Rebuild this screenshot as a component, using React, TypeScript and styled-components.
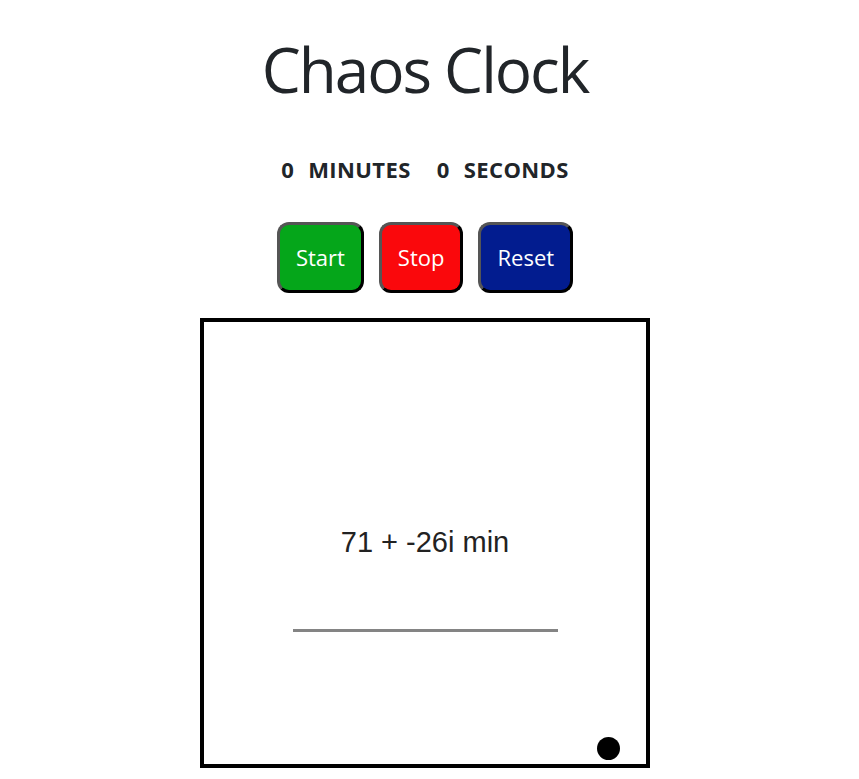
import React from 'react';
import styled, { createGlobalStyle } from 'styled-components';

const GlobalStyle = createGlobalStyle`
  body {
    margin: 0;
    background: #fff;
    font-family: 'Open Sans', 'Noto Sans', sans-serif;
    color: #212529;
  }
`;

const Page = styled.div`
  width: 850px;
  padding-top: 32px;
  display: flex;
  flex-direction: column;
  align-items: center;
`;

const Title = styled.h1`
  margin: 0;
  font-size: 62px;
  font-weight: 500;
  line-height: 1.2;
  letter-spacing: -2px;
`;

const Timer = styled.div`
  margin-top: 47px;
  display: flex;
  gap: 26px;
  font-size: 22px;
  font-weight: 700;
  line-height: 1.5;
  letter-spacing: 0.4px;
`;

const Unit = styled.span`
  display: flex;
  gap: 14px;
`;

const Controls = styled.div`
  margin-top: 36px;
  display: flex;
  gap: 15px;
`;

const Button = styled.button<{ $bg: string }>`
  padding: 15px 16px;
  border: 3px solid;
  border-color: #555 #000 #000 #555;
  border-radius: 12px;
  background: ${(p) => p.$bg};
  color: #fff;
  font-family: 'Open Sans', 'Noto Sans', sans-serif;
  font-size: 22px;
  line-height: 35px;
  cursor: pointer;
`;

const Board = styled.div`
  position: relative;
  margin-top: 25px;
  width: 442px;
  height: 238px;
  padding-top: 204px;
  border: 4px solid #000;
  display: flex;
  flex-direction: column;
  align-items: center;
`;

const Reading = styled.div`
  font-family: 'Liberation Sans', Arial, sans-serif;
  font-size: 29px;
  line-height: 33px;
  color: #222;
`;

const Rule = styled.div`
  margin-top: 70px;
  width: 265px;
  height: 3px;
  background: #848484;
`;

const Dot = styled.div`
  position: absolute;
  left: 393px;
  top: 415px;
  width: 23px;
  height: 23px;
  border-radius: 50%;
  background: #000;
`;

function App() {
  return (
    <Page>
      <GlobalStyle />
      <Title>Chaos Clock</Title>
      <Timer>
        <Unit>
          <span>0</span>
          <span>MINUTES</span>
        </Unit>
        <Unit>
          <span>0</span>
          <span>SECONDS</span>
        </Unit>
      </Timer>
      <Controls>
        <Button $bg="#05a61a">Start</Button>
        <Button $bg="#fa080c">Stop</Button>
        <Button $bg="#021c8f">Reset</Button>
      </Controls>
      <Board>
        <Reading>71 + -26i min</Reading>
        <Rule />
        <Dot />
      </Board>
    </Page>
  );
}

export default App;
